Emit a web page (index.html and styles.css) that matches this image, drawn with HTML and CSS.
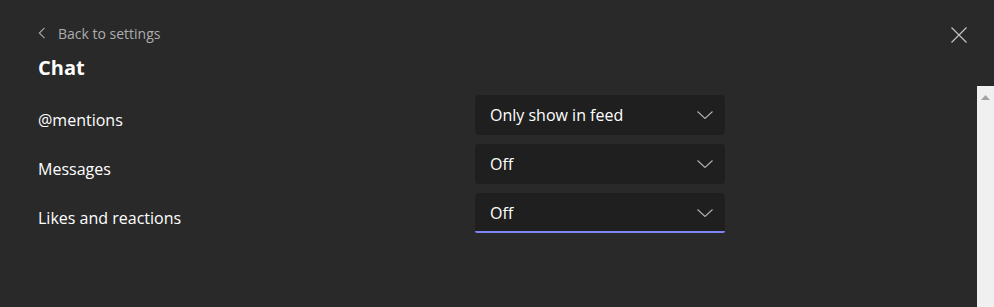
FILE: index.html
```html
<!DOCTYPE html>
<html>
<head>
<meta charset="utf-8">
<link rel="stylesheet" href="styles.css">
</head>
<body>
<div class="page">
  <div class="panel">
    <div class="back">
      <svg class="back-icon" width="8" height="12" viewBox="0 0 8 12"><path d="M6.5 0.8 L1.3 6 L6.5 11.2" fill="none" stroke="#a8a8a8" stroke-width="1.1"/></svg>
      <span>Back to settings</span>
    </div>
    <h1 class="title">Chat</h1>
    <div class="rows">
      <div class="row">
        <div class="label">@mentions</div>
        <div class="select"><span>Only show in feed</span><svg class="chev" width="16" height="8" viewBox="0 0 16 8"><path d="M0.5 0.5 L8 7.5 L15.5 0.5" fill="none" stroke="#b0b0b0" stroke-width="1.1"/></svg></div>
      </div>
      <div class="row">
        <div class="label">Messages</div>
        <div class="select"><span>Off</span><svg class="chev" width="16" height="8" viewBox="0 0 16 8"><path d="M0.5 0.5 L8 7.5 L15.5 0.5" fill="none" stroke="#b0b0b0" stroke-width="1.1"/></svg></div>
      </div>
      <div class="row">
        <div class="label">Likes and reactions</div>
        <div class="select focused"><span>Off</span><svg class="chev" width="16" height="8" viewBox="0 0 16 8"><path d="M0.5 0.5 L8 7.5 L15.5 0.5" fill="none" stroke="#b0b0b0" stroke-width="1.1"/></svg></div>
      </div>
    </div>
  </div>
  <div class="side">
    <svg class="close" width="16" height="16" viewBox="0 0 16 16"><path d="M0.5 0.5 L15.5 15.5 M15.5 0.5 L0.5 15.5" fill="none" stroke="#c4c4c4" stroke-width="1.2"/></svg>
    <div class="scrollbar">
      <svg class="arrow" width="9" height="5" viewBox="0 0 9 5"><path d="M4.5 0 L9 5 L0 5 Z" fill="#a3a3a3"/></svg>
    </div>
  </div>
</div>
</body>
</html>
```
FILE: styles.css
```css
html, body {
  margin: 0;
  padding: 0;
  background: #292929;
  height: 100%;
  overflow: hidden;
}
.page {
  display: flex;
  height: 307px;
  font-family: "Open Sans", "Noto Sans", sans-serif;
  color: #ffffff;
}
.panel {
  flex: 1;
  padding: 23px 0 0 38px;
}
.back {
  display: flex;
  align-items: center;
  gap: 12px;
  color: #adadad;
  font-size: 14px;
  height: 20px;
}
.back-icon {
  display: block;
}
.title {
  margin: 11px 0 0 0;
  font-size: 20px;
  font-weight: 700;
  line-height: 28px;
  color: #ffffff;
}
.rows {
  margin-top: 13px;
  display: flex;
  flex-direction: column;
  gap: 9px;
}
.row {
  display: flex;
  align-items: flex-start;
}
.label {
  width: 437px;
  font-size: 16px;
  line-height: 22px;
  padding-top: 14px;
  color: #ffffff;
}
.select {
  width: 250px;
  height: 40px;
  box-sizing: border-box;
  background: #1f1f1f;
  border-radius: 4px;
  display: flex;
  align-items: center;
  justify-content: space-between;
  padding: 0 12px 0 15px;
  font-size: 16px;
  color: #ffffff;
}
.select span {
  margin-top: -1px;
}
.select.focused {
  border-bottom: 2px solid #7f85f5;
  border-radius: 4px 4px 2px 2px;
  padding-top: 2px;
}
.chev {
  display: block;
}
.side {
  width: 43px;
  position: relative;
}
.close {
  position: absolute;
  left: 0;
  top: 27px;
}
.scrollbar {
  position: absolute;
  right: 0;
  top: 86px;
  bottom: 0;
  width: 17px;
  background: #f0f0f0;
}
.arrow {
  position: absolute;
  left: 4px;
  top: 9px;
}
```
